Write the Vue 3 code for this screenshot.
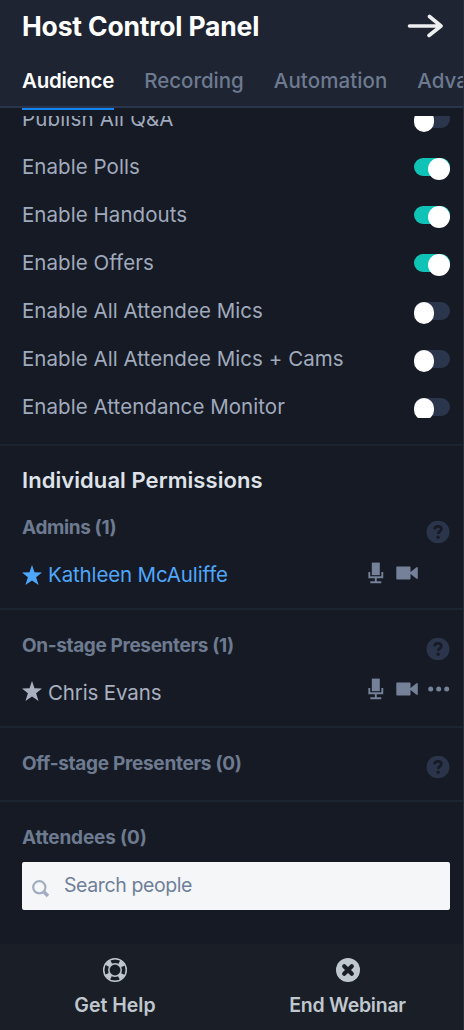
<script setup>
const tabs = [
  { name: 'Audience', cls: 'audience', active: true },
  { name: 'Recording', cls: 'recording' },
  { name: 'Automation', cls: 'automation' },
  { name: 'Advanced', cls: 'advanced' },
]

const settings = [
  { label: 'Publish All Q&A', on: false },
  { label: 'Enable Polls', on: true },
  { label: 'Enable Handouts', on: true },
  { label: 'Enable Offers', on: true },
  { label: 'Enable All Attendee Mics', on: false },
  { label: 'Enable All Attendee Mics + Cams', on: false },
  { label: 'Enable Attendance Monitor', on: false },
]

const groups = [
  { title: 'Admins (1)', cls: 'admins', person: 'Kathleen McAuliffe', self: true },
  { title: 'On-stage Presenters (1)', cls: 'onstage', person: 'Chris Evans', more: true },
  { title: 'Off-stage Presenters (0)', cls: 'offstage' },
]
</script>

<template>
  <div class="panel">
    <header class="header">
      <div class="title-row">
        <h1 class="title">Host Control Panel</h1>
        <svg class="arrow" width="36" height="26" viewBox="0 0 36 26">
          <path d="M2.500 13H33M22.500 3.500L34 13L22 22.500" />
        </svg>
      </div>
      <nav class="tabs">
        <a v-for="t in tabs" :key="t.name" class="tab" :class="[t.cls, { active: t.active }]">{{ t.name }}</a>
      </nav>
    </header>

    <div class="settings">
      <div v-for="s in settings" :key="s.label" class="setting">
        <span class="label">{{ s.label }}</span>
        <span class="toggle" :class="{ on: s.on }"><span class="knob"></span></span>
      </div>
    </div>

    <section class="permissions">
      <h2 class="heading">Individual Permissions</h2>
      <div v-for="g in groups" :key="g.cls" class="group" :class="g.cls">
        <div class="group-head">
          <h3 class="sub">{{ g.title }}</h3>
          <svg class="help" width="24" height="24" viewBox="0 0 24 24">
            <ellipse class="disc" cx="12" cy="12" rx="11.500" ry="11.300" />
            <path class="mark" d="M8.500 9.300C8.700 7.300 10.100 6.300 12 6.300C14 6.300 15.300 7.400 15.300 9C15.300 11.300 12.200 11.400 12.200 13.900" />
            <circle class="dot" cx="12.100" cy="17.200" r="1.700" />
          </svg>
        </div>
        <div v-if="g.person" class="person" :class="{ self: g.self }">
          <svg class="star" width="20" height="20" viewBox="0 0 20 20">
            <path d="M10 0L12.500 7.300L20 7.500L14.100 12.200L16.600 20L10 15.400L3.400 20L5.900 12.200L0 7.500L7.500 7.300Z" />
          </svg>
          <span class="name">{{ g.person }}</span>
          <span class="actions">
            <svg width="16" height="22" viewBox="0 0 16 22">
              <path class="fill" d="M3.800 0.600H11.800V13.200H3.800Z" />
              <path class="line" d="M1.300 10V15.300H14.300V10M7.800 15.500V20M2.300 20.300H13.300" />
            </svg>
            <svg width="22" height="14" viewBox="0 0 22 14">
              <path class="fill" d="M1 0.500H14L14.500 1V13L14 13.500H1L0.300 13V1ZM14.500 6.100L20.500 1.300H21.800V12.700H20.500L14.500 8Z" />
            </svg>
            <svg width="22" height="6" viewBox="0 0 22 6">
              <g v-if="g.more" class="fill">
                <circle cx="2.700" cy="3" r="2.500" /><circle cx="10.700" cy="3" r="2.500" /><circle cx="18.700" cy="3" r="2.500" />
              </g>
            </svg>
          </span>
        </div>
      </div>
      <div class="attendees">
        <h3 class="sub">Attendees (0)</h3>
        <div class="search">
          <svg width="18" height="18" viewBox="0 0 18 18">
            <circle cx="7.300" cy="7.300" r="6.100" />
            <path d="M12 12L16 16" />
          </svg>
          <span class="placeholder">Search people</span>
        </div>
      </div>
    </section>

    <footer class="footer">
      <div class="action help-action">
        <svg width="26" height="26" viewBox="0 0 26 26">
          <circle class="ring" cx="13" cy="13" r="11.300" />
          <circle class="ring" cx="13" cy="13" r="6.200" />
          <circle class="band" cx="13" cy="13" r="8.700" />
        </svg>
        <span class="action-label">Get Help</span>
      </div>
      <div class="action end-action">
        <svg width="26" height="26" viewBox="0 0 26 26">
          <circle class="solid" cx="13" cy="13" r="12" />
          <path class="cross" d="M9.200 9.200L16.800 16.800M16.800 9.200L9.200 16.800" />
        </svg>
        <span class="action-label">End Webinar</span>
      </div>
    </footer>
  </div>
</template>

<style>
html, body { background: #161a24; }
</style>

<style scoped>
.panel {
  box-sizing: border-box;
  width: 464px;
  height: 1030px;
  display: flex;
  flex-direction: column;
  overflow: hidden;
  background: #161a24;
  border-right: 1px solid #2a2e38;
  font-family: Inter, "Liberation Sans", sans-serif;
  white-space: nowrap;
}
h1, h2, h3 { margin: 0; }
svg { flex: none; display: block; }

.header {
  box-sizing: border-box;
  height: 108px;
  flex: none;
  background: #1e2431;
  border-bottom: 2px solid #2a344a;
}
.title-row {
  height: 52px;
  padding: 0 20px 0 22px;
  display: flex;
  align-items: center;
  justify-content: space-between;
}
.title { font-size: 26.500px; line-height: 52px; font-weight: 700; color: #fff; letter-spacing: -0.180px; }
.arrow { fill: none; stroke: #eceeef; stroke-width: 3.600; stroke-linecap: round; stroke-linejoin: round; }
.tabs { height: 58px; padding-left: 22px; display: flex; gap: 30px; }
.tab { box-sizing: border-box; height: 58px; line-height: 58px; font-size: 20.500px; font-weight: 500; color: #6d7a90; flex: none; }
.tab.active { color: #fff; font-weight: 600; border-bottom: 2px solid #1485ee; letter-spacing: -0.280px; }
.automation { letter-spacing: 0.080px; }

.settings { height: 302px; margin-top: 8px; flex: none; overflow: hidden; }
.setting {
  height: 48px;
  padding: 0 13px 0 22px;
  display: flex;
  align-items: center;
  justify-content: space-between;
}
.setting:first-child { margin-top: -21px; }
.setting:first-child .label { letter-spacing: 0.160px; }
.label { font-size: 20.500px; color: #a0aabd; letter-spacing: 0.050px; padding-bottom: 2px; }
.toggle { width: 36px; height: 18px; border-radius: 9px; background: #2b364d; display: flex; }
.knob { width: 20px; height: 22px; border-radius: 10px; background: #fff; flex: none; }
.on { background: #0fc4b7; justify-content: flex-end; }
.on .knob { width: 22px; border-radius: 11px; }

.permissions { margin-top: 26px; height: 500px; box-sizing: border-box; border-top: 2px solid #1d2431; flex: none; }
.heading { height: 58px; line-height: 68px; padding-left: 22px; font-size: 22px; font-weight: 600; color: #dfe3e9; letter-spacing: 0.060px; }
.group { box-sizing: border-box; border-bottom: 2px solid #1d2431; }
.group-head { display: flex; justify-content: space-between; padding: 0 13px 0 22px; }
.sub { font-size: 19px; line-height: 24px; font-weight: 700; color: #6d7a90; letter-spacing: -0.370px; }
.admins { height: 106px; padding-top: 12px; }
.onstage { height: 118px; padding-top: 24px; }
.offstage { height: 74px; padding-top: 24px; }
.offstage .sub { letter-spacing: -0.300px; }
.help { margin-top: 3px; }
.admins .help { margin-top: 4px; }
.person { display: flex; align-items: center; height: 28px; margin-top: 16px; padding: 0 13px 0 22px; color: #a9b0c0; }
.admins .person { margin-top: 15px; }
.disc { fill: #2a354b; }
.mark { fill: none; stroke: #171b26; stroke-width: 2.700; }
.dot { fill: #171b26; }
.self { color: #4fa7fb; }
.star { fill: currentColor; margin-right: 6px; }
.self .star { margin-top: 3px; }
.name { font-size: 20.500px; letter-spacing: -0.140px; padding-top: 2px; }
.actions { margin-left: auto; display: flex; align-items: center; gap: 12px; padding-bottom: 5px; color: #748199; }
.self .actions { padding-bottom: 1px; }
.actions svg:last-child { margin-left: -2px; }
.fill { fill: currentColor; }
.line { fill: none; stroke: currentColor; stroke-width: 1.900; }

.attendees { padding: 24px 13px 0 22px; }
.attendees .sub { letter-spacing: -0.160px; }
.search {
  height: 48px;
  margin-top: 12px;
  padding-left: 10px;
  display: flex;
  align-items: center;
  border-radius: 2px;
  background: #f4f6f8;
}
.search svg { fill: none; stroke: #a2aec0; stroke-width: 2.200; margin-top: 5px; }
.search path { stroke-width: 3.500; }
.placeholder { margin-left: 14px; padding-bottom: 2px; font-size: 19.500px; letter-spacing: -0.400px; color: #6f7f99; }

.footer { height: 86px; flex: none; display: flex; background: #1a1e26; }
.action { width: 230px; flex: none; padding-top: 13px; display: flex; flex-direction: column; align-items: center; color: #c0c8cf; }
.end-action { width: 235px; }
.action-label { font-size: 19.500px; line-height: 28px; margin-top: 8px; font-weight: 600; }
.end-action .action-label { letter-spacing: -0.250px; }
.ring { fill: none; stroke: currentColor; stroke-width: 1.500; }
.band { fill: none; stroke: currentColor; stroke-width: 4.500; stroke-dasharray: 5.500 8.166; stroke-dashoffset: -4.083; }
.solid { fill: #c0c8cf; }
.cross { stroke: #1a1e26; stroke-width: 4.200; stroke-linecap: round; }
</style>
